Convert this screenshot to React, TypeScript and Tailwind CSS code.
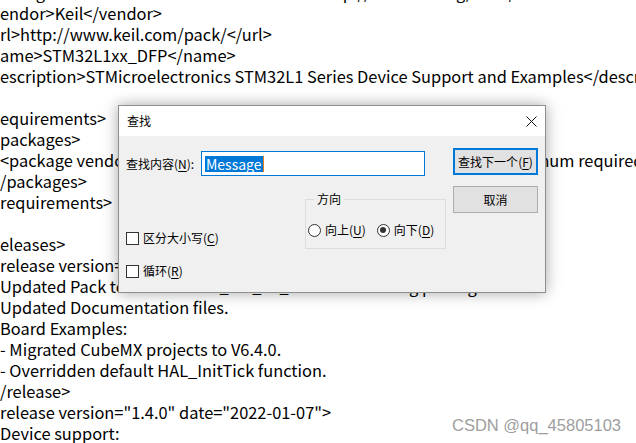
import React from "react";

const lines: string[] = [
  'ackage schemaVersion="1.7.7" xmlns:xs="http://www.w3.org/2001/XMLSchema-instance" xs:noNamespaceSchemaLocation="PACK.xsd">',
  "endor>Keil</vendor>",
  "rl>http://www.keil.com/pack/</url>",
  "ame>STM32L1xx_DFP</name>",
  "escription>STMicroelectronics STM32L1 Series Device Support and Examples</description>",
  "",
  "equirements>",
  "packages>",
  '<package vendor="ARM" name="CMSIS" version="5.7.0" info="AB Minim' + 'um required"/>',
  "/packages>",
  "requirements>",
  "",
  "eleases>",
  'release version="1.5.0" date="2022-07-29">',
  "Updated Pack to STM32Cube_FW_L1_V1.10.3 following package",
  "Updated Documentation files.",
  "Board Examples:",
  "- Migrated CubeMX projects to V6.4.0.",
  "- Overridden default HAL_InitTick function.",
  "/release>",
  'release version="1.4.0" date="2022-01-07">',
  "Device support:",
];

const ui = { fontFamily: '"Noto Sans CJK SC", "Noto Sans", sans-serif' };

function Key({ k }: { k: string }) {
  return (
    <>
      (<span className="underline underline-offset-2">{k}</span>)
    </>
  );
}

function CheckBox({ label, k }: { label: string; k: string }) {
  return (
    <div className="flex items-center h-[16px]">
      <span className="w-[13px] h-[13px] border border-[#333333] bg-white shrink-0" />
      <span className="ml-[4px] text-[12px] leading-[16px] text-black whitespace-nowrap">
        {label}
        <Key k={k} />
      </span>
    </div>
  );
}

function Radio({ label, k, checked }: { label: string; k: string; checked?: boolean }) {
  return (
    <div className="flex items-center h-[16px]">
      <span className="w-[13px] h-[13px] rounded-full border border-[#333333] bg-white shrink-0 flex items-center justify-center">
        {checked && <span className="w-[6px] h-[6px] rounded-full bg-[#333333]" />}
      </span>
      <span className="ml-[4px] text-[12px] leading-[16px] text-black whitespace-nowrap">
        {label}
        <Key k={k} />
      </span>
    </div>
  );
}

export default function App() {
  return (
    <div className="relative w-[636px] h-[443px] overflow-hidden bg-white">
      <div
        className="-mt-[18px] text-[16.4px] leading-[21px] text-black whitespace-pre"
        style={ui}
      >
        {lines.map((l, i) => (
          <div key={i} className="h-[21px]">
            {l}
          </div>
        ))}
      </div>

      {/* Find dialog */}
      <div
        className="absolute left-[118px] top-[105px] w-[428px] h-[188px] border border-[#8e8e8e] shadow-[0_0_14px_rgba(0,0,0,0.35)] flex flex-col"
        style={ui}
      >
        <div className="h-[30px] bg-white flex items-center justify-between pl-[8px] shrink-0">
          <span className="text-[12px] text-black">查找</span>
          <div className="w-[28px] h-full flex items-center justify-center">
            <svg width="11" height="11" viewBox="0 0 11 11">
              <path d="M0.5 0.5 L10.5 10.5 M10.5 0.5 L0.5 10.5" stroke="#111" strokeWidth="1" />
            </svg>
          </div>
        </div>
        <div className="flex-1 bg-[#f0f0f0] flex pl-[7px]">
          <div className="w-[320px] flex flex-col">
            <div className="mt-[15px] h-[25px] flex items-center">
              <span className="w-[75px] text-[12px] text-black whitespace-nowrap">
                查找内容<Key k="N" />:
              </span>
              <div className="w-[224px] h-[25px] border border-[#0078d7] bg-white flex items-center pl-[3px]">
                <span className="bg-[#0078d7] text-white text-[14px] leading-[16px] h-[16px] px-[1px] flex items-center">
                  Message
                </span>
                <span className="w-[1.5px] h-[16px] bg-[#e8801e]" />
              </div>
            </div>
            <div className="flex mt-[16px]">
              <div className="w-[179px] flex flex-col gap-[17px] pt-[38px]">
                <CheckBox label="区分大小写" k="C" />
                <CheckBox label="循环" k="R" />
              </div>
              <fieldset className="w-[141px] h-[57px] border border-[#dcdcdc] pl-[2px]">
                <legend className="ml-[6px] px-[3px] text-[12px] leading-[14px] text-black">方向</legend>
                <div className="flex items-center gap-[11px] pt-[16px]">
                  <Radio label="向上" k="U" />
                  <Radio label="向下" k="D" checked />
                </div>
              </fieldset>
            </div>
          </div>
          <div className="ml-[7px] mt-[12px] flex flex-col gap-[11px]">
            <div className="w-[85px] h-[27px] border-2 border-[#0078d7] bg-[#e1e1e1] flex items-center justify-center text-[12px] text-black whitespace-nowrap">
              查找下一个<Key k="F" />
            </div>
            <div className="w-[85px] h-[27px] border border-[#adadad] bg-[#e1e1e1] flex items-center justify-center text-[12px] text-black">
              取消
            </div>
          </div>
        </div>
      </div>

      <div
        className="absolute left-[452px] top-[415px] text-[16.5px] leading-[20px] text-[#9e9e9e]"
        style={{ fontFamily: '"Liberation Sans", Arial, sans-serif' }}
      >
        CSDN @qq_45805103
      </div>
    </div>
  );
}
